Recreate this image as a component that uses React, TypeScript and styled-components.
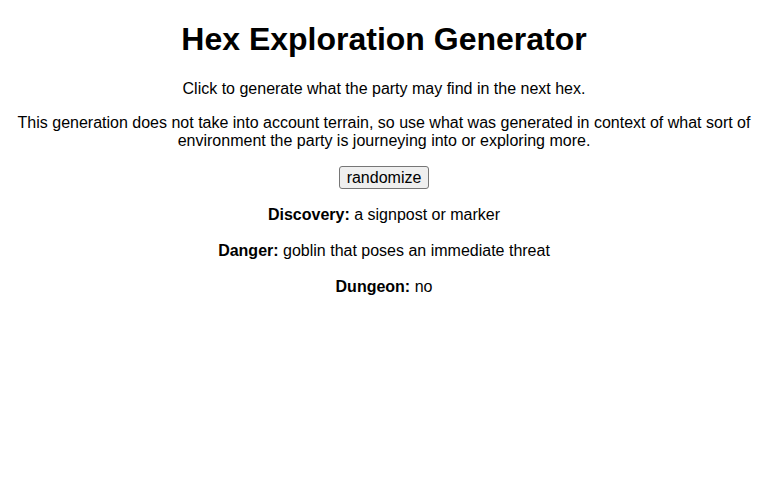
import React, { useState } from "react";
import styled, { createGlobalStyle } from "styled-components";

const GlobalStyle = createGlobalStyle`
  body {
    margin: 0 8px;
    font-family: "Liberation Sans", Arial, sans-serif;
    font-size: 16px;
    color: #000;
    background: #fff;
  }
`;

const Page = styled.main`
  text-align: center;
`;

const Title = styled.h1`
  font-size: 32px;
  font-weight: bold;
  margin: 21.44px 0;
`;

const Text = styled.p`
  margin: 16px 0;
`;

const Button = styled.button`
  font-family: "Liberation Sans", Arial, sans-serif;
  font-size: 16px;
  color: #000;
  background: #efefef;
  border: 1px solid #767676;
  border-radius: 3px;
  padding: 2px 7px 1px;
`;

const Result = styled.p`
  margin: 16px 0;
  line-height: 20px;
`;

const Label = styled.b`
  font-weight: bold;
`;

const discoveries = ["a signpost or marker", "an abandoned campsite", "ruins of a tower", "a hidden cache"];
const dangers = ["goblin that poses an immediate threat", "a rockslide", "wolves on the hunt", "a bandit ambush"];
const dungeons = ["no", "yes"];

const pick = (list: string[]) => list[Math.floor(Math.random() * list.length)];

const App: React.FC = () => {
  const [result, setResult] = useState({
    discovery: discoveries[0],
    danger: dangers[0],
    dungeon: dungeons[0],
  });

  const randomize = () =>
    setResult({ discovery: pick(discoveries), danger: pick(dangers), dungeon: pick(dungeons) });

  return (
    <Page>
      <GlobalStyle />
      <Title>Hex Exploration Generator</Title>
      <Text>Click to generate what the party may find in the next hex.</Text>
      <Text>
        This generation does not take into account terrain, so use what was generated in context of
        what sort of environment the party is journeying into or exploring more.
      </Text>
      <Text>
        <Button onClick={randomize}>randomize</Button>
      </Text>
      <Result>
        <Label>Discovery:</Label> {result.discovery}
      </Result>
      <Result>
        <Label>Danger:</Label> {result.danger}
      </Result>
      <Result>
        <Label>Dungeon:</Label> {result.dungeon}
      </Result>
    </Page>
  );
};

export default App;
